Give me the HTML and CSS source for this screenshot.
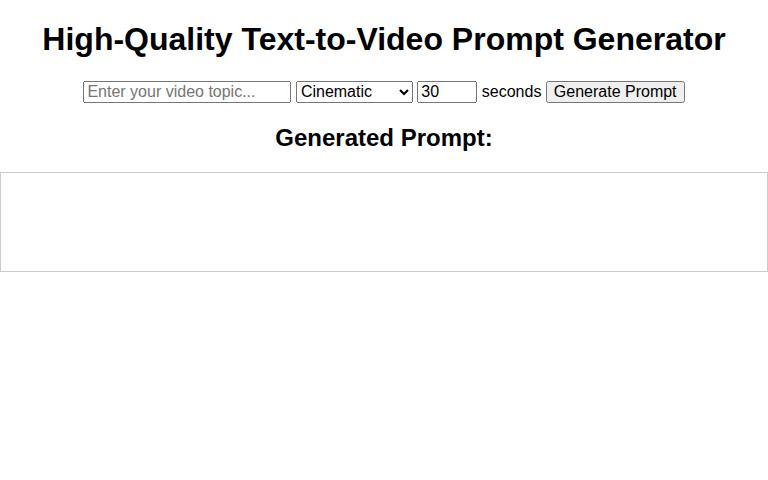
FILE: index.html
```html
<!DOCTYPE html>
<html>
<head>
<meta charset="utf-8">
<title>Text-to-Video Prompt Generator</title>
<link rel="stylesheet" href="styles.css">
</head>
<body>
<h1 class="title">High-Quality Text-to-Video Prompt Generator</h1>
<div class="controls">
<input class="topic" type="text" placeholder="Enter your video topic..."> <select class="style"><option>Cinematic</option><option>Animated</option><option>Documentary</option></select> <input class="duration" type="number" value="30"> <span class="unit">seconds</span> <button class="generate">Generate Prompt</button>
</div>
<h2 class="subtitle">Generated Prompt:</h2>
<div class="output"></div>
</body>
</html>
```
FILE: styles.css
```css
body {
  margin: 0;
  font-family: "Liberation Sans", Arial, sans-serif;
  text-align: center;
  color: #000;
  background: #fff;
}
.title {
  font-size: 32px;
  font-weight: bold;
  margin: 21.44px 0;
}
.controls {
  font-size: 16px;
  padding: 1px 0;
  white-space: nowrap;
}
.controls input,
.controls select,
.controls button {
  font-family: "Liberation Sans", Arial, sans-serif;
  font-size: 16px;
  box-sizing: border-box;
  vertical-align: middle;
  height: 22px;
}
.unit {
  vertical-align: middle;
}
.topic {
  width: 208px;
}
.style {
  width: 117px;
}
.duration {
  width: 60px;
}
.generate {
  padding: 0 6px 1px;
  white-space: nowrap;
  height: 23px;
}
.subtitle {
  font-size: 24px;
  font-weight: bold;
  margin: 19.92px 0;
}
.output {
  border: 1px solid #ccc;
  height: 98px;
  text-align: left;
}
```
